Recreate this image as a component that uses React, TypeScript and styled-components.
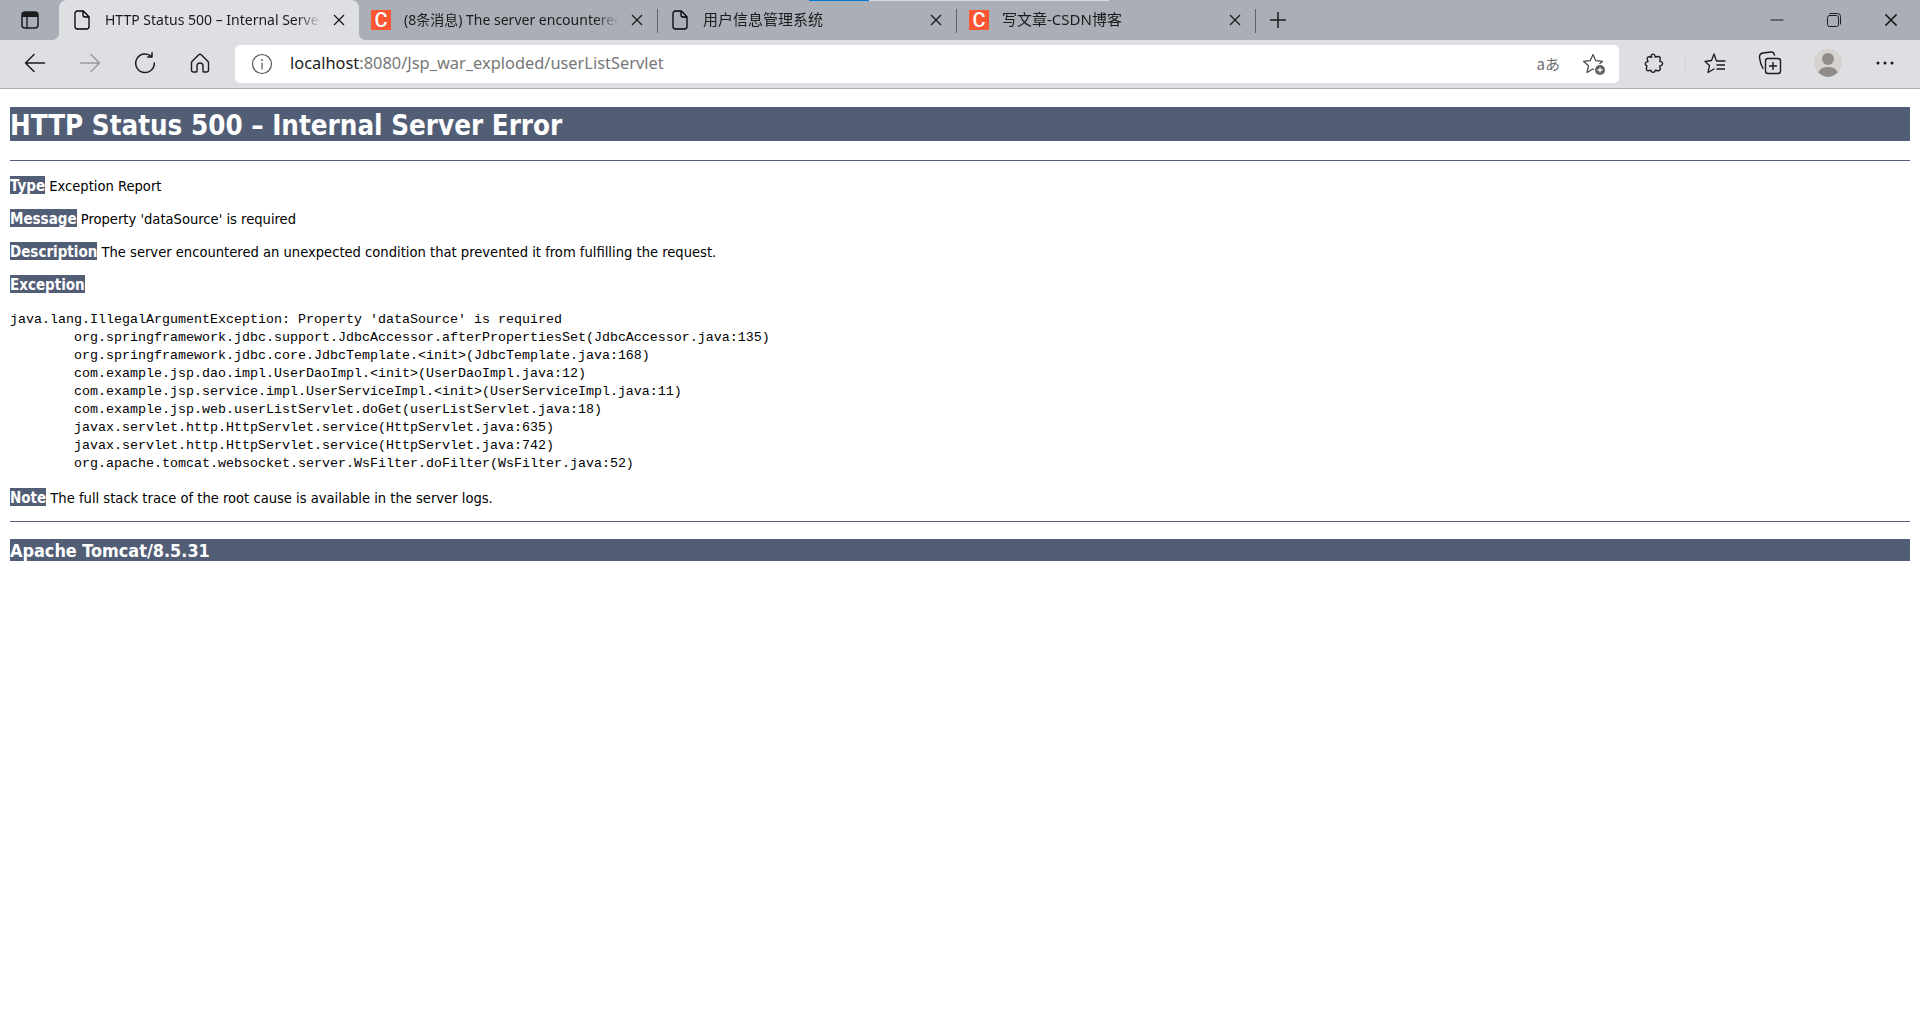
import React from "react";
import styled, { createGlobalStyle } from "styled-components";

const Global = createGlobalStyle`
  html, body { margin: 0; padding: 0; background: #fff; }
  body { font-family: "Noto Sans", "Noto Sans CJK SC", sans-serif; }
`;

const Frame = styled.div`
  width: 1920px;
  min-height: 1028px;
  background: #fff;
  display: flex;
  flex-direction: column;
`;

const TabStrip = styled.div`
  position: relative;
  height: 40px;
  background: #aaafb7;
  display: flex;
  align-items: stretch;
`;

const LoadBar = styled.div<{ $light?: boolean }>`
  position: absolute;
  top: 0;
  left: ${(p) => (p.$light ? 869 : 809)}px;
  width: ${(p) => (p.$light ? 240 : 60)}px;
  height: 1px;
  background: ${(p) => (p.$light ? "#d9dbdf" : "#0078d4")};
`;

const SideButton = styled.div`
  width: 59px;
  display: flex;
  align-items: center;
  justify-content: center;
  color: #1c1c1c;
`;

const Tab = styled.div<{ $active?: boolean }>`
  width: ${(p) => (p.$active ? 300 : 299)}px;
  margin-right: ${(p) => (p.$active ? -1 : 0)}px;
  box-sizing: border-box;
  display: flex;
  align-items: center;
  padding: 0 12px 0 13px;
  position: relative;
  background: ${(p) => (p.$active ? "#dedfe3" : "transparent")};
  border-radius: ${(p) => (p.$active ? "8px 8px 0 0" : "0")};
  ${(p) =>
    p.$active &&
    `
    &::before, &::after {
      content: "";
      position: absolute;
      bottom: 0;
      width: 6px;
      height: 6px;
    }
    &::before {
      left: -6px;
      background: radial-gradient(circle at 0 0, transparent 5.5px, #dedfe3 6px);
    }
    &::after {
      right: -6px;
      background: radial-gradient(circle at 100% 0, transparent 5.5px, #dedfe3 6px);
    }
  `}
`;

const TabDivider = styled.span`
  position: absolute;
  right: -1px;
  top: 9px;
  height: 24px;
  width: 1px;
  background: #5f6368;
`;

const FaviconBox = styled.span`
  width: 20px;
  height: 20px;
  flex: none;
  display: flex;
  align-items: center;
  justify-content: center;
`;

const CsdnIcon = styled(FaviconBox)`
  background: #fc5531;
  color: #fff;
  font: 500 20px/20px "Roboto", sans-serif;
`;

const TabTitle = styled.span<{ $size: number }>`
  flex: 1;
  min-width: 0;
  margin-left: 13px;
  margin-right: 10px;
  margin-bottom: ${(p) => (p.$size > 14 ? 2 : 0)}px;
  font-size: ${(p) => p.$size}px;
  line-height: 20px;
  color: #1b1b1b;
  white-space: nowrap;
  overflow: hidden;
  -webkit-mask-image: linear-gradient(to right, #000 calc(100% - 24px), transparent);
  mask-image: linear-gradient(to right, #000 calc(100% - 24px), transparent);
`;

const TabClose = styled.span`
  width: 16px;
  height: 16px;
  flex: none;
  display: flex;
  color: #1c1c1c;
`;

const NewTab = styled.div`
  width: 45px;
  display: flex;
  align-items: center;
  justify-content: center;
  color: #1c1c1c;
`;

const Spacer = styled.div`
  flex: 1;
`;

const WindowButtons = styled.div`
  display: flex;
  align-items: center;
  padding-right: 1px;
`;

const WindowButton = styled.div`
  width: 57px;
  height: 38px;
  display: flex;
  align-items: center;
  justify-content: center;
  color: #1c1c1c;
`;

const Toolbar = styled.div`
  height: 48px;
  background: #dedfe3;
  border-bottom: 1px solid #aaacb0;
  display: flex;
  align-items: center;
  padding-left: 7px;
`;

const NavButton = styled.div<{ $muted?: boolean; $w?: number }>`
  width: ${(p) => p.$w ?? 55}px;
  height: 36px;
  padding-bottom: 2px;
  box-sizing: border-box;
  display: flex;
  align-items: center;
  justify-content: center;
  color: ${(p) => (p.$muted ? "#9a9b9e" : "#1c1c1c")};
  flex: none;
`;

const AddressBar = styled.div`
  width: 1384px;
  height: 38px;
  margin: 0 4px 0 8px;
  flex: none;
  box-sizing: border-box;
  background: #fff;
  border-radius: 5px;
  display: flex;
  align-items: center;
  padding: 0 13px 0 16px;
`;

const Url = styled.div`
  flex: 1;
  margin-left: 17px;
  font-size: 16.4px;
  line-height: 22px;
  padding-bottom: 2px;
  color: #777;
  white-space: nowrap;
`;

const Host = styled.span`
  color: #1a1a1a;
`;

const Translate = styled.span`
  font-size: 15px;
  color: #6f6f6f;
  margin-right: 22px;
  font-family: "Noto Sans CJK JP", sans-serif;
  line-height: 20px;
`;

const ToolDivider = styled.span`
  width: 1px;
  height: 20px;
  background: #d4d5d9;
  flex: none;
`;

const Page = styled.main`
  padding: 18px 10px 0;
  font-family: "DejaVu Sans Condensed", "DejaVu Sans", sans-serif;
  font-stretch: condensed;
  font-size: 14.6px;
  color: #000;
`;

const Heading = styled.h1`
  margin: 0;
  height: 34px;
  background: #525d76;
  color: #fff;
  font-size: 27.5px;
  font-weight: bold;
  line-height: 36px;
  white-space: nowrap;
`;

const Rule = styled.hr<{ $top: number; $bottom: number }>`
  border: 0;
  height: 1px;
  background: #525d76;
  margin: ${(p) => p.$top}px 0 ${(p) => p.$bottom}px;
`;

const Row = styled.p`
  margin: 0 0 15px;
  height: 18px;
  line-height: 20px;
  white-space: nowrap;
`;

const Label = styled.b`
  display: inline-block;
  height: 18px;
  line-height: 20px;
  background: #525d76;
  color: #fff;
  font-size: 15px;
  font-weight: bold;
`;

const Trace = styled.pre`
  margin: 17px 0 16px;
  padding-top: 1px;
  height: 161px;
  font: 13.333px/18px "Liberation Mono", monospace;
  tab-size: 8;
  color: #000;
`;

const Footer = styled.h3`
  margin: 0;
  height: 22px;
  background: #525d76;
  color: #fff;
  font-size: 17.9px;
  font-weight: bold;
  line-height: 23px;
`;

const stroke = {
  fill: "none",
  stroke: "currentColor",
  strokeWidth: 1.4,
  strokeLinecap: "round" as const,
  strokeLinejoin: "round" as const,
};

const SidebarIcon = () => (
  <svg width="20" height="20" viewBox="0 0 20 20">
    <rect x="2" y="2" width="16" height="16" rx="3" {...stroke} strokeWidth={1.5} />
    <path d="M2 5a3 3 0 0 1 3-3h10a3 3 0 0 1 3 3v2H2z" fill="currentColor" />
    <path d="M7 7v11" {...stroke} />
  </svg>
);

const DocIcon = () => (
  <svg width="20" height="20" viewBox="0 0 20 20">
    <path d="M5.5 1h5.8L17 6.7V16.5a2.5 2.5 0 0 1-2.5 2.5h-9A2.5 2.5 0 0 1 3 16.5v-13A2.5 2.5 0 0 1 5.5 1z M11 1.2V5a2 2 0 0 0 2 2h3.8" {...stroke} strokeWidth={1.3} />
  </svg>
);

const CloseIcon = ({ size = 16 }: { size?: number }) => (
  <svg width={size} height={size} viewBox="0 0 16 16">
    <path d="M3 3l10 10M13 3L3 13" {...stroke} strokeWidth={1.3} strokeLinecap="butt" />
  </svg>
);

const PlusIcon = () => (
  <svg width="20" height="20" viewBox="0 0 20 20">
    <path d="M10 2v16M2 10h16" {...stroke} strokeWidth={1.5} strokeLinecap="butt" />
  </svg>
);

const MinIcon = () => (
  <svg width="14" height="14" viewBox="0 0 14 14">
    <path d="M0.5 7h13" {...stroke} strokeWidth={1} strokeLinecap="butt" />
  </svg>
);

const RestoreIcon = () => (
  <svg width="14" height="14" viewBox="0 0 14 14">
    <rect x="0.5" y="2.5" width="11" height="11" rx="2" {...stroke} strokeWidth={1} />
    <path d="M3 0.5h7.5a3 3 0 0 1 3 3V11" {...stroke} strokeWidth={1} />
  </svg>
);

const BackIcon = () => (
  <svg width="22" height="22" viewBox="0 0 22 22">
    <path d="M1.5 11h19M10 2.5L1.5 11l8.5 8.500" {...stroke} strokeWidth={1.5} />
  </svg>
);

const ForwardIcon = () => (
  <svg width="22" height="22" viewBox="0 0 22 22">
    <path d="M20.5 11h-19M12 2.5l8.500 8.500-8.500 8.500" {...stroke} strokeWidth={1.5} />
  </svg>
);

const ReloadIcon = () => (
  <svg width="22" height="22" viewBox="0 0 22 22">
    <path d="M17.5 4.6A9.300 9.300 0 1 0 20.300 11M18 0.800V5h-4.300" {...stroke} strokeWidth={1.5} />
  </svg>
);

const HomeIcon = () => (
  <svg width="22" height="22" viewBox="0 0 22 22">
    <path d="M3 9.500L9.700 2.800a1.800 1.800 0 0 1 2.600 0L19 9.500a2 2 0 0 1 .5 1.300V18a2 2 0 0 1-2 2h-2.800a.7.7 0 0 1-.7-.7V14a3 3 0 0 0-6 0v5.300a.7.7 0 0 1-.7.7H4.500a2 2 0 0 1-2-2v-7.200A2 2 0 0 1 3 9.500z" {...stroke} strokeWidth={1.4} />
  </svg>
);

const InfoIcon = () => (
  <svg width="22" height="22" viewBox="0 0 22 22" color="#555">
    <circle cx="11" cy="11" r="9.500" {...stroke} strokeWidth={1.2} />
    <path d="M11 10v6" {...stroke} strokeWidth={1.2} />
    <circle cx="11" cy="7" r="0.900" fill="currentColor" />
  </svg>
);

const FavAddIcon = () => (
  <svg width="24" height="24" viewBox="0 0 24 24" color="#444">
    <path d="M11 2.500L13.800 8.700 20.500 9.300 15.500 13.800 17 20.500 11 17 5 20.500 6.500 13.800 1.500 9.300 8.200 8.700Z" {...stroke} strokeWidth={1.2} />
    <circle cx="18" cy="18" r="6.200" fill="#fff" />
    <circle cx="18" cy="18" r="5" fill="#5f5f5f" />
    <path d="M18 15.500v5M15.500 18h5" stroke="#fff" strokeWidth={1.3} />
  </svg>
);

const ExtensionIcon = () => (
  <svg width="22" height="22" viewBox="0 0 24 24">
    <path d="M9 3.500c.5-1.600 3.500-1.600 4 .5l.3 1.500 3.200-.6a2 2 0 0 1 2.300 2.300l-.5 3 1.400.3c2.200.6 2.200 3.700 0 4.300l-1.400.3.500 3a2 2 0 0 1-2.300 2.300l-3-.5c-.5 1.800-1.500 2.300-2.500 2.300s-2-.5-2.500-2.300l-2.500.5a2 2 0 0 1-2.300-2.300l.5-3c-2.300-.7-2.300-3.600 0-4.300l1.200-.3-.8-3a2 2 0 0 1 2.300-2.300l2.600.5z" {...stroke} strokeWidth={1.5} />
  </svg>
);

const FavListIcon = () => (
  <svg width="24" height="24" viewBox="0 0 24 24">
    <path d="M22 10H13.500L11 3 8.500 9.500 2 10.500 6.500 14.500 5 21.500 11 18" {...stroke} strokeWidth={1.3} />
    <path d="M13.500 14H22M13.500 18H22" {...stroke} strokeWidth={1.3} strokeLinecap="butt" />
  </svg>
);

const CollectionsIcon = () => (
  <svg width="24" height="24" viewBox="0 0 24 24">
    <rect x="7.500" y="7.500" width="15" height="15" rx="2.500" {...stroke} />
    <path d="M15 11v8M11 15h8" {...stroke} strokeLinecap="butt" />
    <path d="M5 17.500C3.500 15 2 11 1.500 6.500 1.300 4 2.500 2.500 5 2l8-1c1.800-.2 3 .8 3.500 3" {...stroke} />
  </svg>
);

const AvatarIcon = () => (
  <svg width="28" height="28" viewBox="0 0 28 28">
    <circle cx="14" cy="14" r="14" fill="#d6d3cf" />
    <circle cx="14" cy="10" r="6" fill="#8f8c8a" />
    <path d="M4.500 23.500C6 19 10 18 14 18s8 1 9.500 5.500A14 14 0 0 1 14 28a14 14 0 0 1-9.500-4.500z" fill="#8f8c8a" />
  </svg>
);

const DotsIcon = () => (
  <svg width="20" height="6" viewBox="0 0 20 6">
    <circle cx="3" cy="3" r="1.500" fill="#1c1c1c" />
    <circle cx="10" cy="3" r="1.500" fill="#1c1c1c" />
    <circle cx="17" cy="3" r="1.500" fill="#1c1c1c" />
  </svg>
);

const tabs = [
  { title: "HTTP Status 500 – Internal Server Error", active: true, icon: "doc", size: 14 },
  { title: "(8条消息) The server encountered an unexpected", icon: "csdn", size: 14 },
  { title: "用户信息管理系统", icon: "doc", size: 15 },
  { title: "写文章-CSDN博客", icon: "csdn", size: 15 },
];

const trace = `java.lang.IllegalArgumentException: Property 'dataSource' is required
\torg.springframework.jdbc.support.JdbcAccessor.afterPropertiesSet(JdbcAccessor.java:135)
\torg.springframework.jdbc.core.JdbcTemplate.<init>(JdbcTemplate.java:168)
\tcom.example.jsp.dao.impl.UserDaoImpl.<init>(UserDaoImpl.java:12)
\tcom.example.jsp.service.impl.UserServiceImpl.<init>(UserServiceImpl.java:11)
\tcom.example.jsp.web.userListServlet.doGet(userListServlet.java:18)
\tjavax.servlet.http.HttpServlet.service(HttpServlet.java:635)
\tjavax.servlet.http.HttpServlet.service(HttpServlet.java:742)
\torg.apache.tomcat.websocket.server.WsFilter.doFilter(WsFilter.java:52)`;

export default function App() {
  return (
    <Frame>
      <Global />
      <TabStrip>
        <LoadBar />
        <LoadBar $light />
        <SideButton>
          <SidebarIcon />
        </SideButton>
        {tabs.map((t, i) => (
          <Tab key={t.title} $active={t.active}>
            {t.icon === "doc" ? (
              <FaviconBox>
                <DocIcon />
              </FaviconBox>
            ) : (
              <CsdnIcon>C</CsdnIcon>
            )}
            <TabTitle $size={t.size}>{t.title}</TabTitle>
            <TabClose>
              <CloseIcon />
            </TabClose>
            {i > 0 && <TabDivider />}
          </Tab>
        ))}
        <NewTab>
          <PlusIcon />
        </NewTab>
        <Spacer />
        <WindowButtons>
          <WindowButton>
            <MinIcon />
          </WindowButton>
          <WindowButton>
            <RestoreIcon />
          </WindowButton>
          <WindowButton>
            <CloseIcon size={18} />
          </WindowButton>
        </WindowButtons>
      </TabStrip>
      <Toolbar>
        <NavButton>
          <BackIcon />
        </NavButton>
        <NavButton $muted>
          <ForwardIcon />
        </NavButton>
        <NavButton>
          <ReloadIcon />
        </NavButton>
        <NavButton>
          <HomeIcon />
        </NavButton>
        <AddressBar>
          <InfoIcon />
          <Url>
            <Host>localhost</Host>:8080/Jsp_war_exploded/userListServlet
          </Url>
          <Translate>aあ</Translate>
          <FavAddIcon />
        </AddressBar>
        <NavButton $w={62}>
          <ExtensionIcon />
        </NavButton>
        <ToolDivider />
        <NavButton $w={58}>
          <FavListIcon />
        </NavButton>
        <NavButton $w={52}>
          <CollectionsIcon />
        </NavButton>
        <NavButton $w={64}>
          <AvatarIcon />
        </NavButton>
        <NavButton $w={50}>
          <DotsIcon />
        </NavButton>
      </Toolbar>
      <Page>
        <Heading>HTTP Status 500 – Internal Server Error</Heading>
        <Rule $top={19} $bottom={15} />
        <Row>
          <Label>Type</Label> Exception Report
        </Row>
        <Row>
          <Label>Message</Label> Property 'dataSource' is required
        </Row>
        <Row>
          <Label>Description</Label> The server encountered an unexpected condition that prevented it from fulfilling the request.
        </Row>
        <Row>
          <Label>Exception</Label>
        </Row>
        <Trace>{trace}</Trace>
        <Row>
          <Label>Note</Label> The full stack trace of the root cause is available in the server logs.
        </Row>
        <Rule $top={0} $bottom={17} />
        <Footer>Apache Tomcat/8.5.31</Footer>
      </Page>
    </Frame>
  );
}
